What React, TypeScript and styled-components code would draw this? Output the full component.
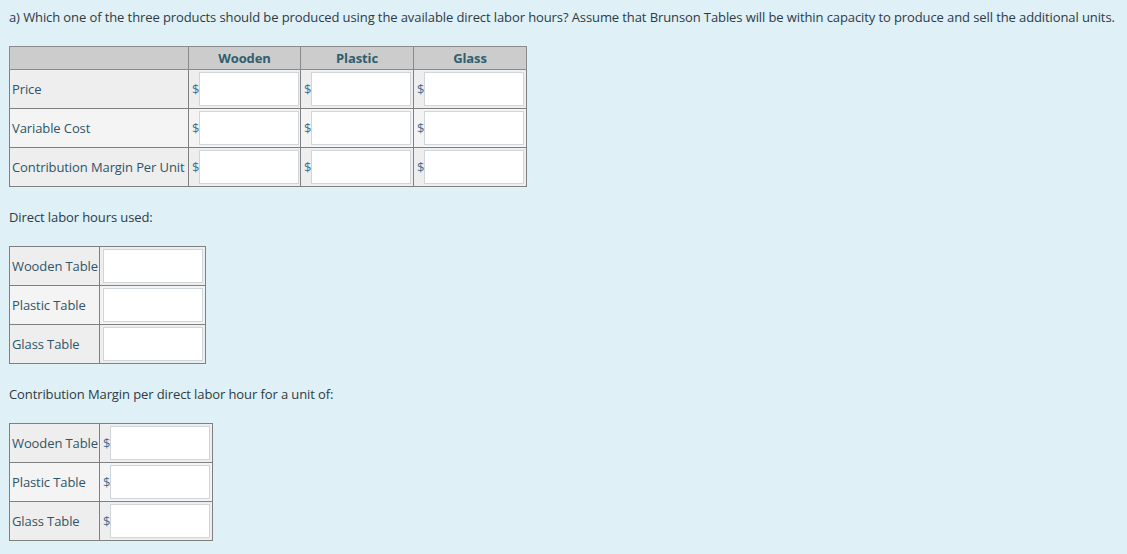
import styled, { createGlobalStyle } from 'styled-components';

const GlobalStyle = createGlobalStyle`
  html, body {
    margin: 0;
    padding: 0;
    background: #dff0f7;
  }
  body {
    font-family: "Open Sans", "Noto Sans", sans-serif;
    font-size: 13px;
    letter-spacing: -0.1px;
    color: #2d3b45;
  }
`;

const products = ['Wooden', 'Plastic', 'Glass'];
const costRows = ['Price', 'Variable Cost', 'Contribution Margin Per Unit'];
const tables = ['Wooden Table', 'Plastic Table', 'Glass Table'];

const MoneyField = () => (
  <FieldWrap>
    <Dollar>$</Dollar>
    <Field type="text" />
  </FieldWrap>
);

const App = () => (
  <Page>
    <GlobalStyle />
    <Question>
      a) Which one of the three products should be produced using the available direct labor hours? Assume that
      Brunson Tables will be within capacity to produce and sell the additional units.
    </Question>

    <Grid $w={517}>
      <colgroup>
        <col style={{ width: 179 }} />
        <col style={{ width: 112 }} />
        <col style={{ width: 113 }} />
        <col style={{ width: 113 }} />
      </colgroup>
      <thead>
        <tr>
          <HeadCell />
          {products.map((p) => (
            <HeadCell key={p}>{p}</HeadCell>
          ))}
        </tr>
      </thead>
      <tbody>
        {costRows.map((r, i) => (
          <tr key={r}>
            <LabelCell $alt={i % 2 === 1}>{r}</LabelCell>
            {products.map((p) => (
              <InputCell key={p} $alt={i % 2 === 1}>
                <MoneyField />
              </InputCell>
            ))}
          </tr>
        ))}
      </tbody>
    </Grid>

    <Caption>Direct labor hours used:</Caption>
    <Grid $w={196}>
      <colgroup>
        <col style={{ width: 90 }} />
        <col style={{ width: 106 }} />
      </colgroup>
      <tbody>
        {tables.map((t, i) => (
          <tr key={t}>
            <LabelCell $alt={i % 2 === 1}>{t}</LabelCell>
            <InputCell $alt={i % 2 === 1}>
              <FieldWrap>
                <Field type="text" />
              </FieldWrap>
            </InputCell>
          </tr>
        ))}
      </tbody>
    </Grid>

    <Caption>Contribution Margin per direct labor hour for a unit of:</Caption>
    <Grid $w={203}>
      <colgroup>
        <col style={{ width: 90 }} />
        <col style={{ width: 113 }} />
      </colgroup>
      <tbody>
        {tables.map((t, i) => (
          <tr key={t}>
            <LabelCell $alt={i % 2 === 1}>{t}</LabelCell>
            <InputCell $alt={i % 2 === 1}>
              <MoneyField />
            </InputCell>
          </tr>
        ))}
      </tbody>
    </Grid>
  </Page>
);

export default App;

const Page = styled.div`
  padding: 8px 9px 12px;
`;

const Question = styled.p`
  margin: 0 0 20px;
  line-height: 18px;
  white-space: nowrap;
`;

const Caption = styled.p`
  margin: 21px 0 20px;
  line-height: 18px;
`;

const Grid = styled.table<{ $w: number }>`
  width: ${({ $w }) => $w}px;
  border-collapse: collapse;
  border: 1px solid #555;
  table-layout: fixed;
`;

const HeadCell = styled.th`
  height: 22px;
  padding: 0;
  background: #cccccc;
  border: 1px solid #8a8a8a;
  color: #2e5f6e;
  font-weight: 700;
  font-size: 13px;
  text-align: center;
`;

const LabelCell = styled.td<{ $alt?: boolean }>`
  height: 38px;
  padding: 0 1px 0 2px;
  background: ${({ $alt }) => ($alt ? '#f4f4f4' : '#eeeeee')};
  border: 1px solid #808080;
  color: #2f5566;
  white-space: nowrap;
  overflow: hidden;
  vertical-align: middle;
`;

const InputCell = styled.td<{ $alt?: boolean }>`
  height: 38px;
  padding: 0;
  background: ${({ $alt }) => ($alt ? '#f4f4f4' : '#eeeeee')};
  border: 1px solid #808080;
  vertical-align: middle;
`;

const FieldWrap = styled.div`
  display: flex;
  align-items: center;
  padding: 0 2px 0 3px;
`;

const Dollar = styled.span`
  width: 7px;
  color: #3d6f93;
  font-size: 13px;
`;

const Field = styled.input`
  box-sizing: border-box;
  width: 100px;
  height: 34px;
  margin: 0;
  border: 1px solid #cfd6db;
  background: #fff;
  outline: none;
`;
